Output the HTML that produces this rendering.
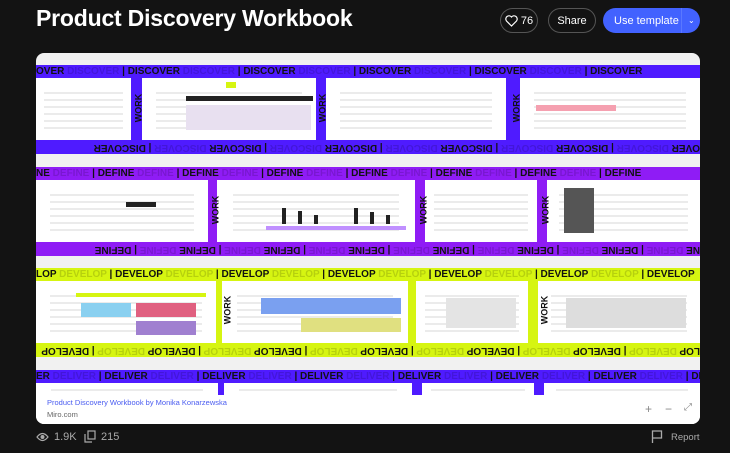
<!DOCTYPE html>
<html><head><style>
*{margin:0;padding:0;box-sizing:border-box}
body{width:730px;height:453px;background:#131313;font-family:"Liberation Sans",sans-serif;position:relative;overflow:hidden;color:#fff}
.a{position:absolute}
h1{position:absolute;left:36px;top:5px;font-size:23px;font-weight:bold;letter-spacing:-0.2px;color:#fff}
.btn{position:absolute;top:8px;height:25px;border:1px solid #555;border-radius:13px;font-size:11px;display:flex;align-items:center;justify-content:center;color:#fff}
.card{position:absolute;left:36px;top:53px;width:664px;height:371px;background:#f1f1f1;border-radius:8px;overflow:hidden}
.band{position:absolute;left:0;width:664px;height:13px;font-size:10px;font-weight:bold;color:#111;white-space:nowrap;overflow:hidden;line-height:13px}
.band i{font-style:normal;color:rgba(0,0,0,0.15)}
.fr{position:absolute;background:#fff}
.fr::after{content:"";position:absolute;left:8%;top:22%;width:84%;height:62%;background:repeating-linear-gradient(180deg,#e6e6e6 0 2px,transparent 2px 7px);opacity:.8}
.fr.s::after{top:30%;height:40%}
.ln{position:absolute;height:2px;background:#ccc;z-index:2}
.blk{position:absolute;background:#222;z-index:2}
.lm{position:absolute;background:#d6f511;z-index:2}
.work{position:absolute;font-size:9px;font-weight:bold;color:#111;transform:rotate(-90deg);transform-origin:center}
</style></head><body>
<h1>Product Discovery Workbook</h1>
<div class="btn" style="left:500px;width:38px"><svg width="13" height="12" viewBox="0 0 13 12"><path d="M6.5 11L1.5 6A3 3 0 0 1 6.5 2A3 3 0 0 1 11.5 6Z" fill="none" stroke="#fff" stroke-width="1.2"/></svg>&nbsp;76</div>
<div class="btn" style="left:548px;width:48px">Share</div>
<div class="btn" style="left:603px;width:97px;background:#4262ff;border:none;justify-content:flex-start;padding-left:11px">Use template<span style="position:absolute;left:78px;top:0;width:1px;height:25px;background:#5a78ff"></span><span style="position:absolute;left:85px;font-size:8px">⌄</span></div>

<div class="card">
<div class="band" style="top:12px;background:#4f1bff">OVER <i>DISCOVER</i> | DISCOVER <i>DISCOVER</i> | DISCOVER <i>DISCOVER</i> | DISCOVER <i>DISCOVER</i> | DISCOVER <i>DISCOVER</i> | DISCOVER</div>
<div class="a" style="top:24px;left:0;width:664px;height:64px;background:#4f1bff"></div>
<div class="fr" style="top:25px;left:0;width:95px;height:62px"></div>
<div class="fr" style="top:25px;left:106px;width:174px;height:62px"></div>
<div class="fr" style="top:25px;left:290px;width:180px;height:62px"></div>
<div class="fr" style="top:25px;left:484px;width:180px;height:62px"></div>
<div class="band" style="top:88px;background:#4f1bff;transform:scale(-1,-1)">OVER <i>DISCOVER</i> | DISCOVER <i>DISCOVER</i> | DISCOVER <i>DISCOVER</i> | DISCOVER <i>DISCOVER</i> | DISCOVER <i>DISCOVER</i> | DISCOVER</div>
<div class="work" style="left:88px;top:50px">WORK</div>
<div class="work" style="left:272px;top:50px">WORK</div>
<div class="work" style="left:466px;top:50px">WORK</div>
<div class="blk" style="left:150px;top:43px;width:70px;height:5px"></div>
<div class="blk" style="left:212px;top:43px;width:65px;height:5px"></div>
<div class="ln" style="left:150px;top:52px;width:125px;height:25px;background:#e8e0f0"></div>
<div class="lm" style="left:190px;top:29px;width:10px;height:6px"></div>
<div class="ln" style="left:500px;top:52px;width:80px;height:6px;background:#f5a0b0"></div>

<div class="band" style="top:114px;background:#8f1cf5">NE <i>DEFINE</i> | DEFINE <i>DEFINE</i> | DEFINE <i>DEFINE</i> | DEFINE <i>DEFINE</i> | DEFINE <i>DEFINE</i> | DEFINE <i>DEFINE</i> | DEFINE <i>DEFINE</i> | DEFINE</div>
<div class="a" style="top:126px;left:0;width:664px;height:64px;background:#8f1cf5"></div>
<div class="fr" style="top:127px;left:0;width:172px;height:62px"></div>
<div class="fr" style="top:127px;left:181px;width:198px;height:62px"></div>
<div class="fr" style="top:127px;left:389px;width:112px;height:62px"></div>
<div class="fr" style="top:127px;left:511px;width:153px;height:62px"></div>
<div class="band" style="top:190px;background:#8f1cf5;transform:scale(-1,-1)">NE <i>DEFINE</i> | DEFINE <i>DEFINE</i> | DEFINE <i>DEFINE</i> | DEFINE <i>DEFINE</i> | DEFINE <i>DEFINE</i> | DEFINE <i>DEFINE</i> | DEFINE <i>DEFINE</i> | DEFINE</div>
<div class="work" style="left:165px;top:152px">WORK</div>
<div class="work" style="left:373px;top:152px">WORK</div>
<div class="work" style="left:495px;top:152px">WORK</div>
<div class="blk" style="left:246px;top:155px;width:4px;height:16px"></div>
<div class="blk" style="left:262px;top:158px;width:4px;height:13px"></div>
<div class="blk" style="left:278px;top:162px;width:4px;height:9px"></div>
<div class="blk" style="left:318px;top:155px;width:4px;height:16px"></div>
<div class="blk" style="left:334px;top:159px;width:4px;height:12px"></div>
<div class="blk" style="left:350px;top:162px;width:4px;height:9px"></div>
<div class="ln" style="left:230px;top:173px;width:140px;height:4px;background:#c090ff"></div>
<div class="blk" style="left:90px;top:149px;width:30px;height:5px"></div>
<div class="blk" style="left:528px;top:135px;width:30px;height:45px;background:#555"></div>

<div class="band" style="top:215px;background:#d6f511">LOP <i>DEVELOP</i> | DEVELOP <i>DEVELOP</i> | DEVELOP <i>DEVELOP</i> | DEVELOP <i>DEVELOP</i> | DEVELOP <i>DEVELOP</i> | DEVELOP <i>DEVELOP</i> | DEVELOP</div>
<div class="a" style="top:227px;left:0;width:664px;height:64px;background:#d6f511"></div>
<div class="fr" style="top:228px;left:0;width:180px;height:62px"></div>
<div class="fr" style="top:228px;left:186px;width:186px;height:62px"></div>
<div class="fr" style="top:228px;left:380px;width:112px;height:62px"></div>
<div class="fr" style="top:228px;left:502px;width:162px;height:62px"></div>
<div class="band" style="top:291px;background:#d6f511;transform:scale(-1,-1)">LOP <i>DEVELOP</i> | DEVELOP <i>DEVELOP</i> | DEVELOP <i>DEVELOP</i> | DEVELOP <i>DEVELOP</i> | DEVELOP <i>DEVELOP</i> | DEVELOP <i>DEVELOP</i> | DEVELOP</div>
<div class="work" style="left:177px;top:252px">WORK</div>
<div class="work" style="left:494px;top:252px">WORK</div>
<div class="ln" style="left:40px;top:240px;width:130px;height:4px;background:#d6f511"></div>
<div class="ln" style="left:45px;top:250px;width:50px;height:14px;background:#8ad0f0"></div>
<div class="ln" style="left:100px;top:250px;width:60px;height:14px;background:#e06080"></div>
<div class="ln" style="left:100px;top:268px;width:60px;height:14px;background:#a080d0"></div>
<div class="ln" style="left:225px;top:245px;width:140px;height:16px;background:#7aa0f0"></div>
<div class="ln" style="left:265px;top:265px;width:100px;height:14px;background:#e0e080"></div>
<div class="ln" style="left:410px;top:245px;width:70px;height:30px;background:#e4e4e4"></div>
<div class="ln" style="left:530px;top:245px;width:120px;height:30px;background:#ddd"></div>

<div class="band" style="top:317px;background:#4f1bff">ER <i>DELIVER</i> | DELIVER <i>DELIVER</i> | DELIVER <i>DELIVER</i> | DELIVER <i>DELIVER</i> | DELIVER <i>DELIVER</i> | DELIVER <i>DELIVER</i> | DELIVER <i>DELIVER</i> | DELIVER</div>
<div class="a" style="top:329px;left:0;width:664px;height:20px;background:#4f1bff"></div>
<div class="fr s" style="top:330px;left:0;width:182px;height:20px"></div>
<div class="fr s" style="top:330px;left:188px;width:188px;height:20px"></div>
<div class="fr s" style="top:330px;left:386px;width:112px;height:20px"></div>
<div class="fr s" style="top:330px;left:508px;width:156px;height:20px"></div>

<div class="a" style="top:342px;left:0;width:664px;height:29px;background:#fff"></div>
<div class="a" style="left:11px;top:345px;font-size:7.5px;color:#4a5cf0">Product Discovery Workbook by Monika Konarzewska</div>
<div class="a" style="left:11px;top:357px;font-size:7.5px;color:#666">Miro.com</div>
<div class="a" style="left:609px;top:349px;font-size:12px;color:#888">+</div>
<div class="a" style="left:629px;top:349px;font-size:12px;color:#888">−</div>
<div class="a" style="left:648px;top:349px;font-size:10px;color:#888">⤢</div>
</div>

<svg class="a" style="left:36px;top:431px" width="13" height="12" viewBox="0 0 13 12"><path d="M1 6Q6.5-1 12 6Q6.5 13 1 6Z" fill="none" stroke="#aaa" stroke-width="1.2"/><circle cx="6.5" cy="6" r="2" fill="#aaa"/></svg>
<div class="a" style="left:54px;top:431px;font-size:11px;color:#aaa">1.9K</div>
<svg class="a" style="left:84px;top:430px" width="12" height="13" viewBox="0 0 12 13"><rect x="4" y="1" width="7" height="8" fill="none" stroke="#aaa" stroke-width="1.2"/><path d="M1 4V12H8" fill="none" stroke="#aaa" stroke-width="1.2"/></svg>
<div class="a" style="left:101px;top:431px;font-size:11px;color:#aaa">215</div>
<svg class="a" style="left:651px;top:430px" width="12" height="13" viewBox="0 0 12 13"><path d="M1.5 13V1H10.5V8H1.5" fill="none" stroke="#aaa" stroke-width="1.3"/></svg>
<div class="a" style="left:671px;top:432px;font-size:9.5px;color:#aaa">Report</div>
</body></html>
